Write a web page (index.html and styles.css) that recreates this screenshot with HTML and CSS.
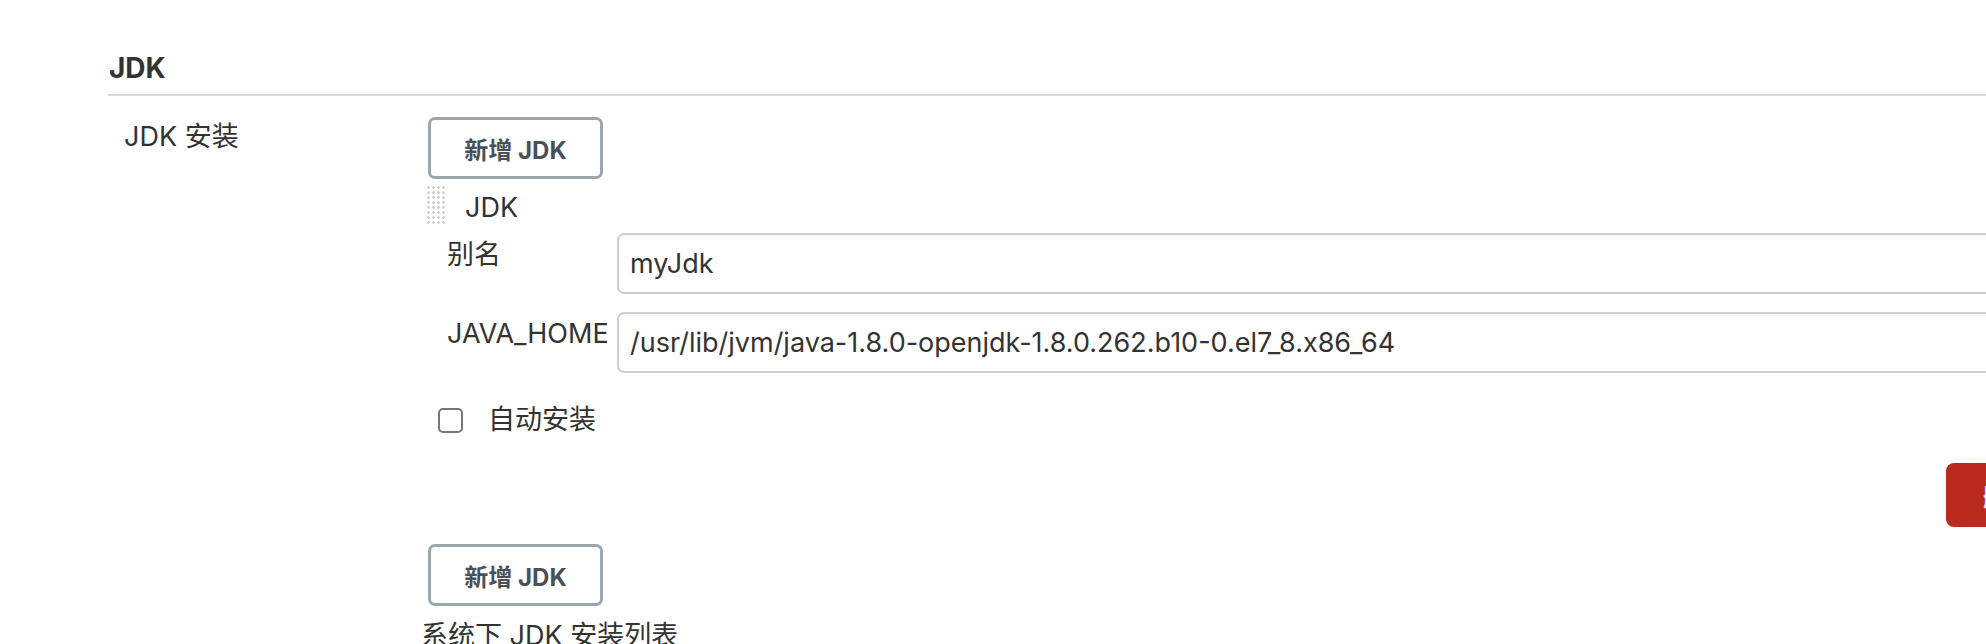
FILE: index.html
```html
<!DOCTYPE html>
<html lang="zh">
<head>
<meta charset="utf-8">
<title>JDK</title>
<link rel="stylesheet" href="styles.css">
</head>
<body>
<div class="page">
  <h2 class="section-title">JDK</h2>
  <div class="row">
    <div class="row-label">JDK 安装</div>
    <div class="row-content">
      <button class="btn-add">新增 JDK</button>
      <div class="chunk">
        <div class="chunk-head">
          <span class="handle"></span>
          <span class="chunk-title">JDK</span>
        </div>
        <div class="fields">
          <label class="field-label">别名</label>
          <input class="field-input" type="text" value="myJdk">
          <label class="field-label">JAVA_HOME</label>
          <input class="field-input" type="text" value="/usr/lib/jvm/java-1.8.0-openjdk-1.8.0.262.b10-0.el7_8.x86_64">
        </div>
        <label class="check-row">
          <input class="check" type="checkbox">
          <span>自动安装</span>
        </label>
        <div class="chunk-actions">
          <button class="btn-delete">删除 JDK</button>
        </div>
      </div>
      <button class="btn-add">新增 JDK</button>
      <div class="desc">系统下 JDK 安装列表</div>
    </div>
  </div>
</div>
</body>
</html>
```
FILE: styles.css
```css
html, body {
  margin: 0;
  padding: 0;
  overflow: hidden;
  background: #fff;
}
body {
  font-family: Inter, "Noto Sans CJK SC", sans-serif;
  font-size: 27px;
  line-height: 32px;
  color: #333;
}
.page {
  padding-left: 108px;
  width: 2100px;
}
.section-title {
  margin: 0;
  padding: 51px 0 9px 1px;
  font-size: 28px;
  line-height: 34px;
  font-weight: bold;
  color: #333;
  border-bottom: 2px solid #dcdcdc;
}
.row {
  display: grid;
  grid-template-columns: 320px 1640px;
  padding-top: 21px;
}
.row-label {
  padding: 4px 0 0 16px;
}
.row-content {
  display: flex;
  flex-direction: column;
  align-items: flex-start;
}
.btn-add {
  font-family: Inter, "Noto Sans CJK SC", sans-serif;
  font-size: 24px;
  font-weight: bold;
  color: #4a5058;
  background: #fff;
  border: 3px solid #9ba6ae;
  border-radius: 7px;
  height: 62px;
  width: 175px;
  padding: 0;
  box-sizing: border-box;
}
.chunk {
  align-self: stretch;
  margin-top: 6px;
  display: flex;
  flex-direction: column;
}
.chunk-head {
  display: flex;
  align-items: flex-start;
  height: 40px;
}
.handle {
  width: 20px;
  height: 40px;
  margin-left: -2px;
  background-image: radial-gradient(circle, #cfcfcf 1.1px, transparent 1.6px);
  background-size: 5px 5px;
}
.chunk-title {
  margin-left: 19px;
  padding-top: 7px;
}
.fields {
  display: grid;
  grid-template-columns: 170px 1fr;
  row-gap: 18px;
  margin-top: 8px;
  padding-left: 19px;
}
.field-label {
  padding-top: 6px;
}
.field-input {
  height: 61px;
  box-sizing: border-box;
  border: 2px solid #cfcfcf;
  border-radius: 7px;
  padding: 0 11px;
  font-family: Inter, "Noto Sans CJK SC", sans-serif;
  font-size: 27px;
  color: #333;
  box-shadow: inset 0 2px 2px rgba(0,0,0,0.04);
}
.check-row {
  display: flex;
  align-items: center;
  margin-top: 31px;
  padding-left: 10px;
}
.check {
  appearance: none;
  -webkit-appearance: none;
  width: 25px;
  height: 25px;
  margin: 0;
  border: 2px solid #777;
  border-radius: 5px;
  background: #fff;
}
.check-row span {
  margin-left: 25px;
}
.chunk-actions {
  display: flex;
  justify-content: flex-end;
  margin-top: 27px;
}
.btn-delete {
  font-family: Inter, "Noto Sans CJK SC", sans-serif;
  font-size: 24px;
  font-weight: bold;
  color: #fff;
  background: #bb2a1f;
  border: none;
  border-radius: 8px;
  height: 64px;
  width: 170px;
  padding: 0 0 0 37px;
  text-align: left;
  margin-right: -48px;
}
.chunk + .btn-add {
  margin-top: 17px;
}
.desc {
  margin: 14px 0 0 -7px;
}
```
